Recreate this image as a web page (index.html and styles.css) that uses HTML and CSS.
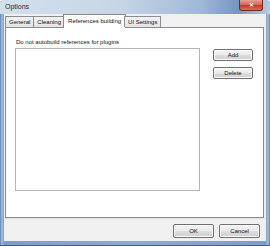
FILE: index.html
```html
<!DOCTYPE html>
<html lang="en">
<head>
  <meta charset="UTF-8" />
  <title>Options</title>
  <link rel="stylesheet" href="styles.css">
</head>
<body>

  <div class="window">
    <!-- Title bar -->
    <div class="titlebar">
      <span class="title">Options</span>
      <span class="close">&#x2715;</span>
    </div>

    <div class="client">
      <!-- Tabs -->
      <div class="tabs">
        <div class="tab">General</div>
        <div class="tab">Cleaning</div>
        <div class="tab active">References building</div>
        <div class="tab">UI Settings</div>
      </div>

      <!-- Tab page -->
      <div class="page">
        <div class="list-area">
          <div class="label">Do not autobuild references for plugins</div>
          <div class="listbox"></div>
        </div>
        <div class="side-buttons">
          <button class="btn">Add</button>
          <button class="btn">Delete</button>
        </div>
      </div>

      <!-- Dialog buttons -->
      <div class="footer">
        <button class="btn btn-wide">OK</button>
        <button class="btn btn-wide">Cancel</button>
      </div>
    </div>
  </div>

</body>
</html>
```

FILE: styles.css
```css
* {
  box-sizing: border-box;
  margin: 0;
  padding: 0;
  font-family: 'Liberation Sans', Arial, sans-serif;
}

body {
  background: #ffffff;
}

.window {
  width: 270px;
  height: 246px;
  display: flex;
  flex-direction: column;
  padding: 0 4px 5px 4px;
  background: linear-gradient(to right, #5f84b8 0, #a8c0dd 2px, #7d9dc8 4px, #8eaad0 50%, #7d9dc8 calc(100% - 4px), #a8c0dd calc(100% - 2px), #5f84b8 100%);
  border-radius: 4px 4px 0 0;
  box-shadow: inset 0 -1px 0 #3d5f90;
}

.titlebar {
  height: 14px;
  display: flex;
  align-items: flex-start;
  justify-content: space-between;
  margin: 0 -4px;
  padding: 0 7px 0 5px;
  background: linear-gradient(to right, #d3dfec 0%, #c6d5e6 45%, #9fb7d6 75%, #7895c0 88%, #b9cce2 100%);
  border-radius: 4px 4px 0 0;
}

.title {
  font-size: 7px;
  line-height: 14px;
  color: #1e2a3a;
  padding-top: 0;
}

.close {
  width: 24px;
  height: 11px;
  font-size: 6px;
  line-height: 11px;
  font-weight: bold;
  text-align: center;
  color: #ffffff;
  background: linear-gradient(#e8a093 0%, #d46a5a 45%, #c0392b 55%, #d9705f 100%);
  border: 1px solid #6e2a25;
  border-top: none;
  border-radius: 0 0 3px 3px;
}

.client {
  flex: 1;
  display: flex;
  flex-direction: column;
  background: #f0f0f0;
}

.tabs {
  height: 13px;
  display: flex;
  align-items: flex-end;
  padding-left: 1px;
  position: relative;
  z-index: 1;
}

.tab {
  height: 11px;
  padding: 0 3px;
  font-size: 6px;
  line-height: 10px;
  color: #111111;
  background: linear-gradient(#f2f2f2, #e3e3e3);
  border: 1px solid #898c95;
  border-bottom: none;
  margin-right: -1px;
}

.tab.active {
  height: 14px;
  margin-bottom: -1px;
  padding: 0 4px;
  line-height: 12px;
  background: #ffffff;
  margin-left: -1px;
  margin-right: -2px;
}

.page {
  height: 191px;
  margin: 0 2px 0 1px;
  padding: 9px 0 0 9px;
  display: flex;
  background: #ffffff;
  border: 1px solid #898c95;
}

.list-area {
  width: 185px;
}

.label {
  height: 11px;
  padding-left: 1px;
  font-size: 6px;
  line-height: 10px;
  color: #111111;
}

.listbox {
  height: 143px;
  background: #ffffff;
  border: 1px solid #b5b5b5;
}

.side-buttons {
  margin: 12px 0 0 13px;
  display: flex;
  flex-direction: column;
  gap: 6px;
}

.btn {
  width: 40px;
  height: 12px;
  font-size: 6px;
  color: #111111;
  border: 1px solid #707070;
  border-radius: 2px;
  background: linear-gradient(#f4f4f4 0%, #ebebeb 48%, #dddddd 52%, #cfcfcf 100%);
  box-shadow: inset 0 0 0 1px #fbfbfb;
}

.footer {
  flex: 1;
  display: flex;
  justify-content: flex-end;
  align-items: flex-start;
  gap: 5px;
  padding: 5px 6px 0 0;
  border-top: 1px solid #dfdfdf;
}

.btn-wide {
  width: 41px;
  height: 14px;
}
```
